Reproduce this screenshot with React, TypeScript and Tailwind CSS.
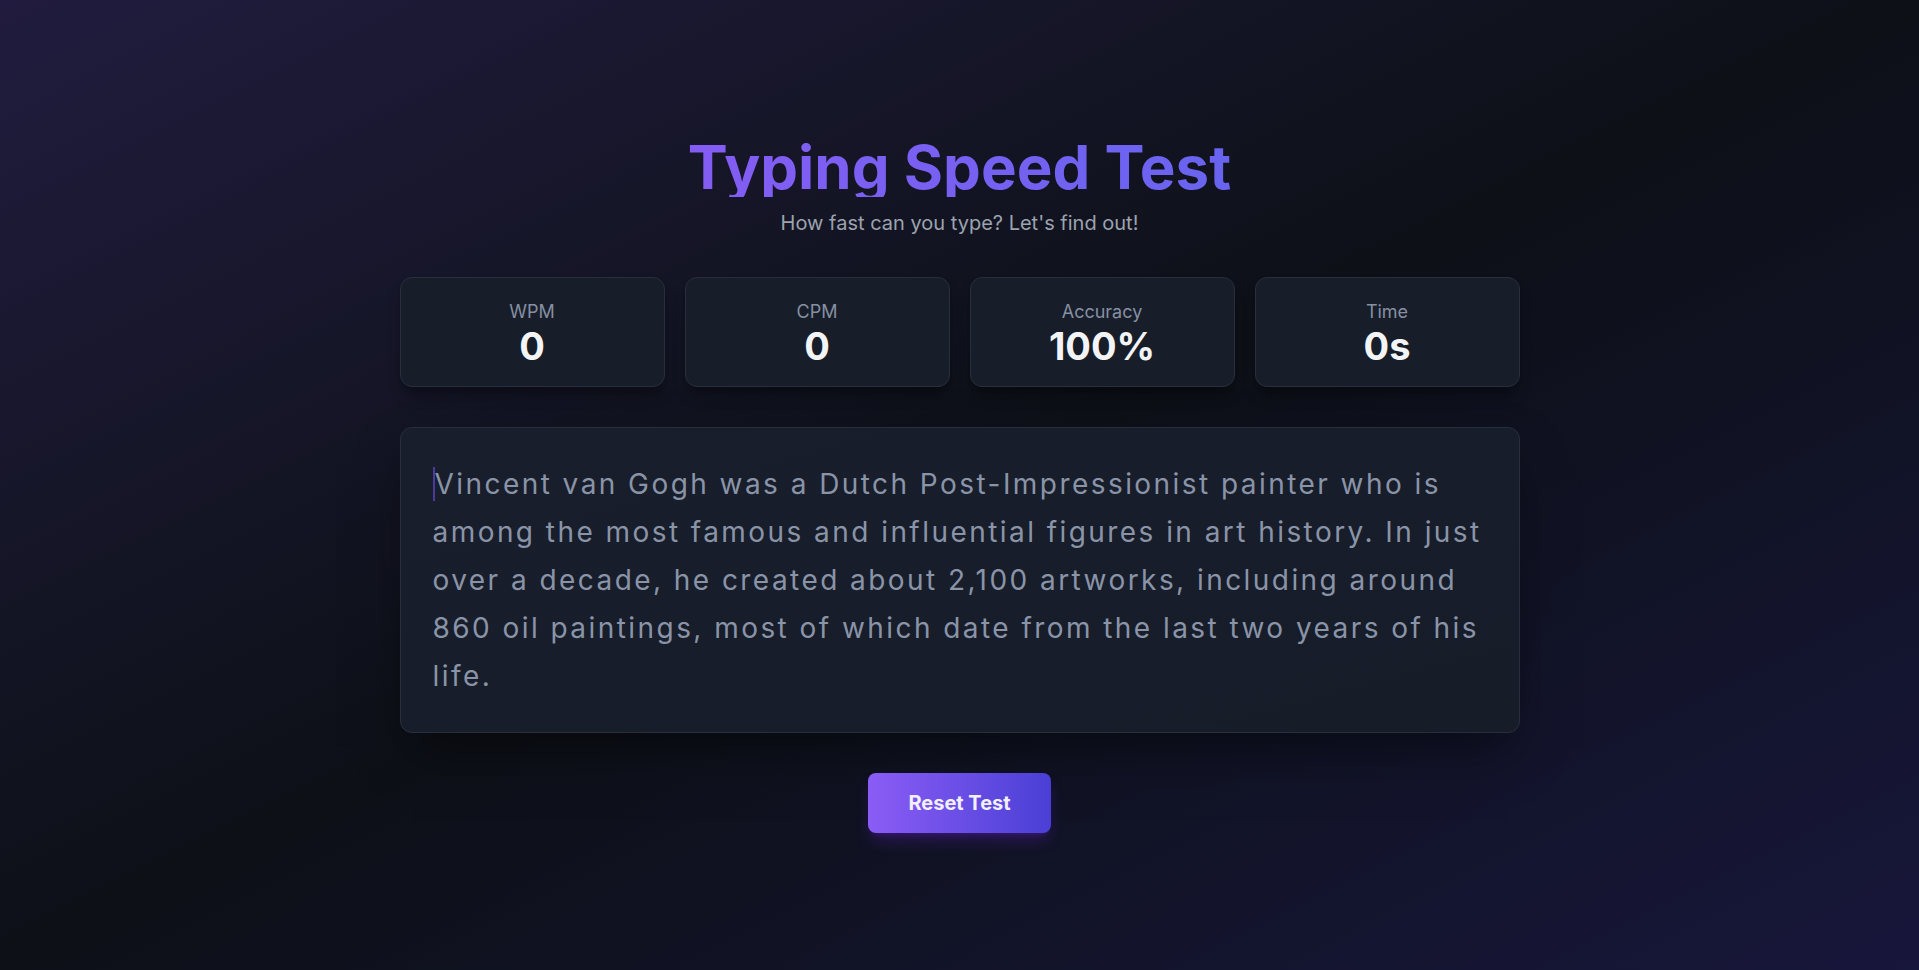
import { useState } from 'react'

const passage =
  'Vincent van Gogh was a Dutch Post-Impressionist painter who is among the most famous and influential figures in art history. In just over a decade, he created about 2,100 artworks, including around 860 oil paintings, most of which date from the last two years of his life.'

interface StatCardProps {
  label: string
  value: string
}

function StatCard({ label, value }: StatCardProps) {
  return (
    <div className="flex flex-col items-center rounded-xl border border-[#282e3b] bg-[#171d29] p-5 shadow-lg shadow-black/30">
      <span className="text-lg text-[#8690a3]">{label}</span>
      <span className="text-[38px] leading-10 font-bold text-[#f3f4f6]">{value}</span>
    </div>
  )
}

export default function App() {
  const [typed] = useState('')
  const current = typed.length

  return (
    <div className="min-h-screen w-full bg-linear-to-br from-[#211c3f] via-[#0d1017] via-50% to-[#17163b] font-[Inter,sans-serif]">
      <main className="mx-auto flex min-h-screen w-full max-w-[1120px] flex-col items-stretch justify-center">
        <header className="mb-10 flex flex-col items-center">
          <h1 className="mb-3 bg-linear-to-r from-[#845cf4] to-[#6864ef] bg-clip-text text-6xl leading-none font-bold text-transparent">
            Typing Speed Test
          </h1>
          <p className="text-xl text-[#9ca3af]">How fast can you type? Let's find out!</p>
        </header>

        <section className="mb-10 grid grid-cols-4 gap-5">
          <StatCard label="WPM" value="0" />
          <StatCard label="CPM" value="0" />
          <StatCard label="Accuracy" value="100%" />
          <StatCard label="Time" value="0s" />
        </section>

        <div className="mb-10 rounded-xl border border-[#282e3b] bg-linear-to-br from-[#181e2b] to-[#171c29] p-8 shadow-2xl shadow-black/50">
          <p className="text-[28px] leading-[48px] tracking-[0.087em] text-[#8a94a8]">
            {passage.split('').map((ch, i) => (
              <span key={i} className={i === current ? 'border-l-2 border-[#4b3a9a]' : ''}>
                {ch}
              </span>
            ))}
          </p>
        </div>

        <div className="flex justify-center">
          <button className="rounded-lg bg-linear-to-r from-[#8b5cf6] to-[#4a3fd5] px-10 py-4 text-xl font-bold text-[#f1f0fb] shadow-lg shadow-violet-600/25">
            Reset Test
          </button>
        </div>
      </main>
    </div>
  )
}
